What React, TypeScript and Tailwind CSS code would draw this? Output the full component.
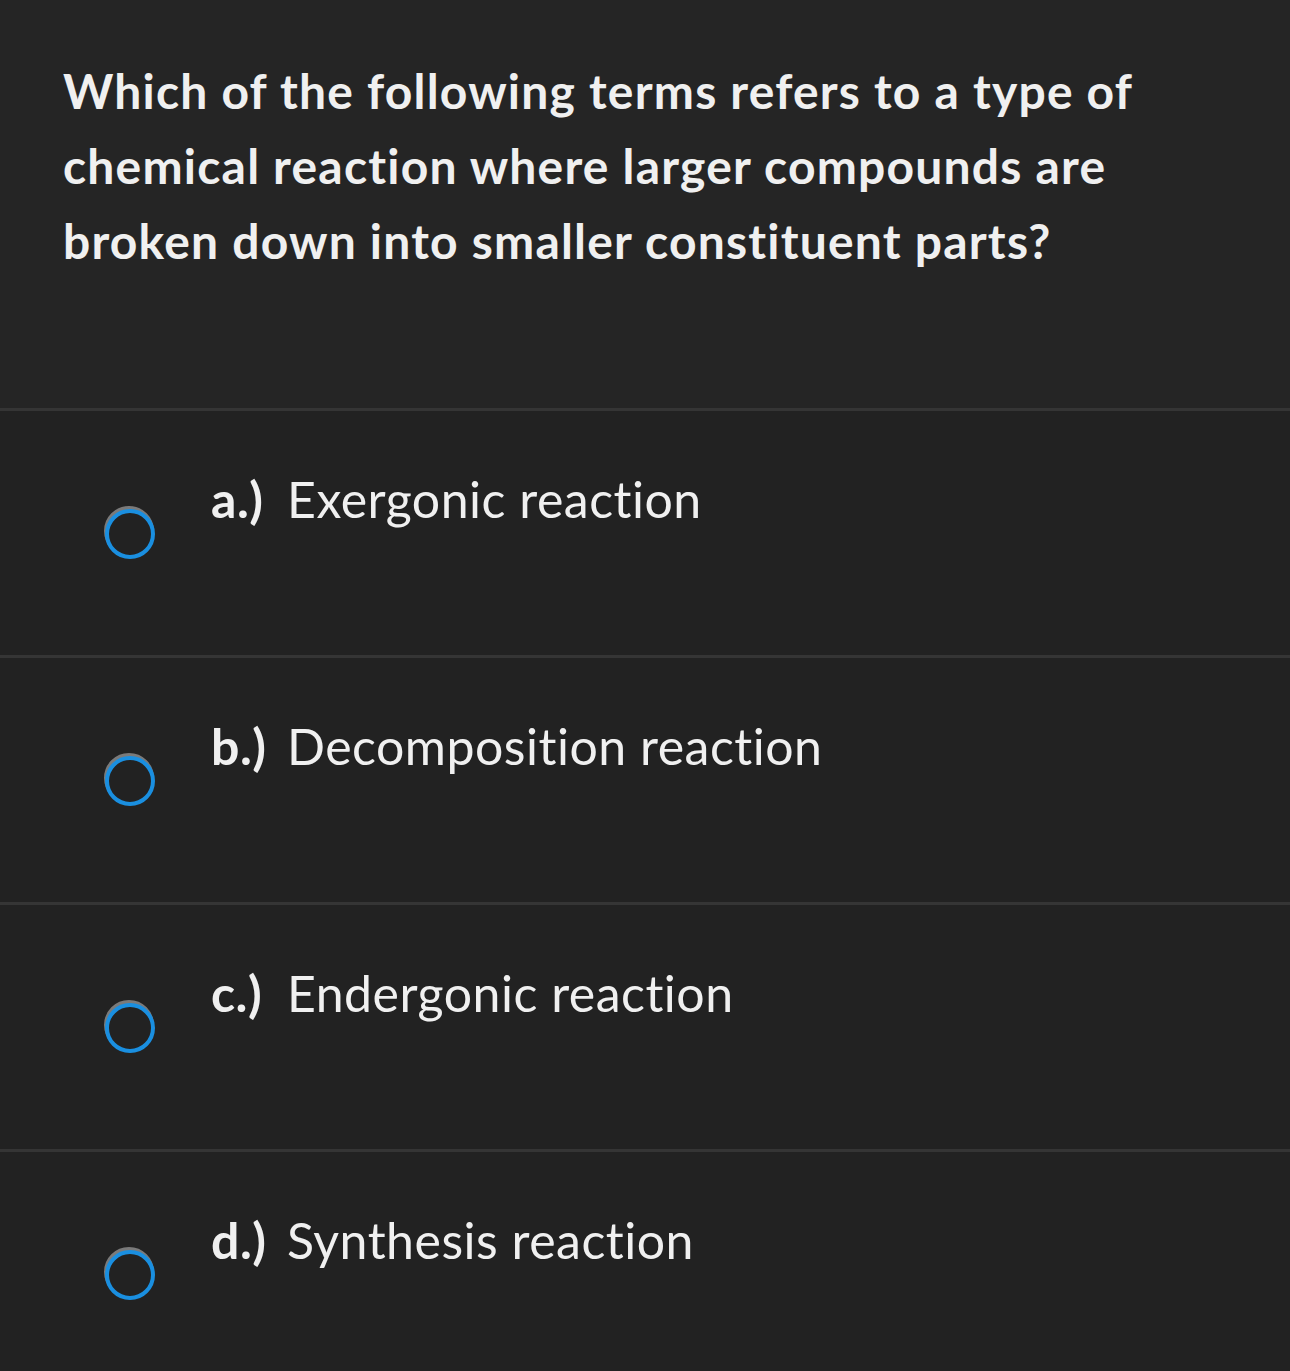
import React from 'react';

const options = [
  { key: 'a.)', text: 'Exergonic reaction' },
  { key: 'b.)', text: 'Decomposition reaction' },
  { key: 'c.)', text: 'Endergonic reaction' },
  { key: 'd.)', text: 'Synthesis reaction' },
];

function Radio() {
  return (
    <svg width="56" height="58" viewBox="0 0 56 58" className="shrink-0 mt-[42px]">
      <circle cx="27" cy="27" r="23" fill="none" stroke="#7a7a7a" strokeWidth="4" />
      <circle cx="28" cy="30" r="23" fill="#222222" stroke="#1a8fe0" strokeWidth="4" />
    </svg>
  );
}

export default function App() {
  return (
    <div
      className="min-h-screen w-[1290px] bg-[#222222] text-[#f0f0f0] [font-variant-ligatures:none]"
      style={{ fontFamily: 'Lato, "Liberation Sans", sans-serif' }}
    >
      {/* Question */}
      <div className="h-[408px] bg-[#252525] pl-[63px] pt-[53px]">
        <p className="max-w-[1100px] text-[48px] font-bold leading-[75px] tracking-[1.2px]">
          Which of the following terms refers to a type of chemical reaction where larger compounds are broken down into smaller constituent parts?
        </p>
      </div>

      {/* Options */}
      {options.map((o) => (
        <div key={o.key} className="h-[247px] border-t-[3px] border-[#353535] flex items-start pl-[102px] pt-[51px]">
          <Radio />
          <div className="ml-[53px] flex items-baseline">
            <span className="w-[76px] text-[50px] font-bold tracking-[0.5px]">{o.key}</span>
            <span className="text-[50px] font-normal tracking-[0.5px]">{o.text}</span>
          </div>
        </div>
      ))}
    </div>
  );
}
